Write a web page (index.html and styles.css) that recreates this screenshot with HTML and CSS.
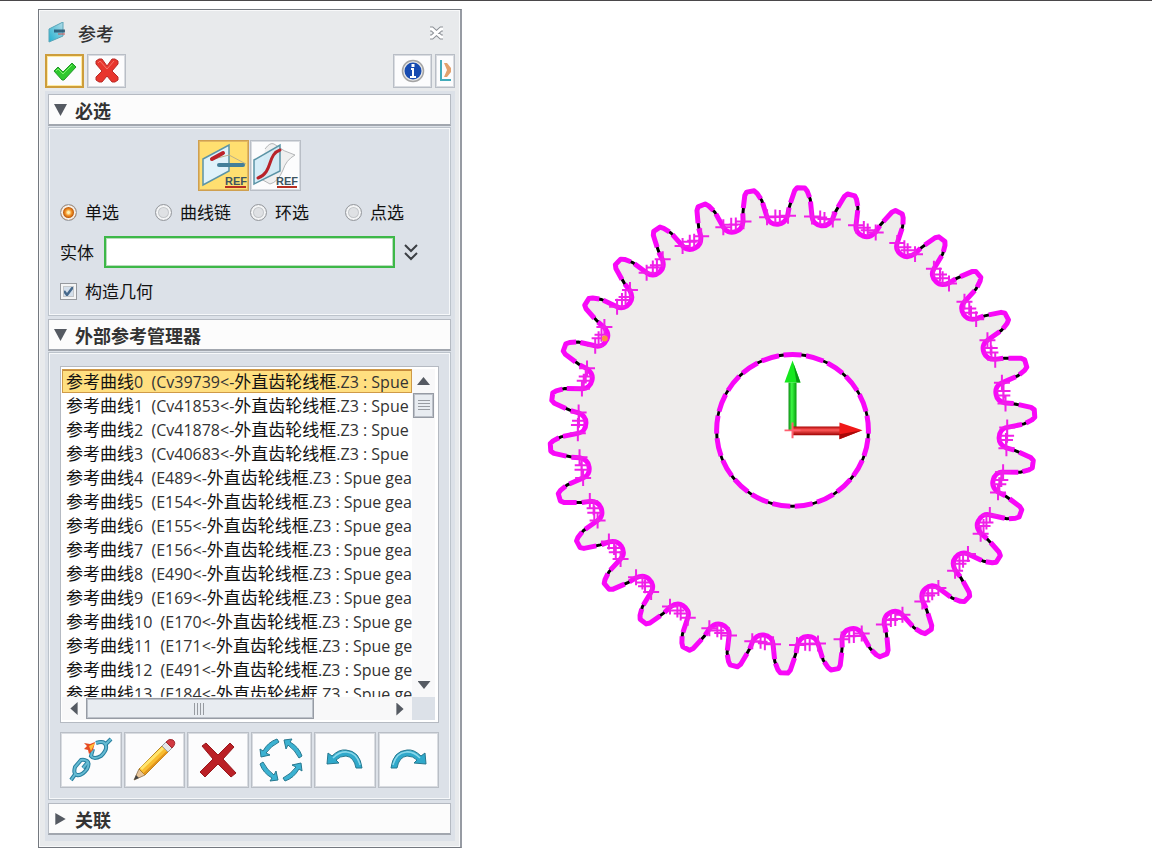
FILE: index.html
```
<!DOCTYPE html>
<html lang="zh-CN">
<head>
    <meta charset="UTF-8">
    <meta name="viewport" content="width=device-width, initial-scale=1.0">
    <title>参考</title>
    <link rel="stylesheet" href="styles.css">
</head>
<body>

    <form class="panel" onsubmit="return false">
        <!-- Title -->
        <header class="title-bar">
            <svg width="20" height="22" viewBox="0 0 20 22">
                <defs>
                    <linearGradient id="plane" x1="1" y1="0" x2="0" y2="1">
                        <stop offset="0" stop-color="#b4dce8"/>
                        <stop offset="1" stop-color="#1fb0d0"/>
                    </linearGradient>
                </defs>
                <path d="M1 7L15 0V14L1 20Z" fill="url(#plane)" stroke="#5aa5b8" stroke-width="1"/>
                <path d="M6 9H17" stroke="#1f4a66" stroke-width="3" stroke-opacity="0.8"/>
                <path d="M10 12H17" stroke="#d05050" stroke-width="1"/>
            </svg>
            <h1>参考</h1>
            <button type="button" class="close" aria-label="关闭">
                <svg width="18" height="14" viewBox="0 0 18 14">
                    <path d="M3 3H5L14 11H16M16 3H14L5 11H3" fill="none" stroke="#8c9096" stroke-width="5"/>
                    <path d="M3 3H5L14 11H16M16 3H14L5 11H3" fill="none" stroke="#fff" stroke-width="3"/>
                </svg>
            </button>
        </header>

        <div class="actions">
            <button type="submit" class="box ok" aria-label="确定">
                <svg width="26" height="24" viewBox="0 0 26 24">
                    <path d="M2 12L6 8L11 13L20 4L24 8L12 21H10Z" fill="#2fc92f" stroke="#22962a" stroke-width="1" stroke-linejoin="round"/>
                    <path d="M4 12L6 10L11 15L20 6" fill="none" stroke="#7df06c" stroke-width="1"/>
                </svg>
            </button>
            <button type="button" class="box" aria-label="取消">
                <svg width="26" height="26" viewBox="0 0 26 26">
                    <path d="M2 3L5 1H8L13 8L18 1H21L24 3V6L18 13L24 19V22L21 24H18L13 18L8 24H5L2 22V19L8 13L2 6Z" fill="#e8362e" stroke="#b82a26" stroke-width="1" stroke-linejoin="round"/>
                    <path d="M4 5L6 3L13 11L20 3" fill="none" stroke="#f4766c" stroke-width="1"/>
                </svg>
            </button>
            <button type="button" class="box info" aria-label="信息">
                <svg width="24" height="24" viewBox="0 0 24 24">
                    <circle cx="12" cy="12" r="10.5" fill="#e8e8e8" stroke="#a4a4a4" stroke-width="1.5"/>
                    <circle cx="12" cy="12" r="8.5" fill="#174bb0"/>
                    <path d="M12 5V8" stroke="#fff" stroke-width="3"/>
                    <path d="M10 10H12V17M9 18H15M12 10V18" fill="none" stroke="#fff" stroke-width="2"/>
                </svg>
            </button>
            <button type="button" class="box half" aria-label="对齐">
                <svg width="14" height="24" viewBox="0 0 14 24">
                    <path d="M3 1V21H13" fill="none" stroke="#42abba" stroke-width="2"/>
                    <path d="M6 4H9L13 9V13L9 18H6L9 11Z" fill="#e2a06c"/>
                </svg>
            </button>
        </div>

        <div class="sections">
            <!-- Required -->
            <h2 class="section-head"><button type="button"><span class="arrow down"></span>必选</button></h2>
            <section class="section required">
                <div class="modes">
                    <button type="button" class="box mode selected" aria-label="参考几何">
                        <svg width="47" height="47" viewBox="0 0 47 47">
                            <path d="M3 17L29 3V29L3 43Z" fill="#dff2fa" stroke="#5b94a6" stroke-width="1.5"/>
                            <path d="M10 18L29 13L46 22" fill="none" stroke="#b9b08a" stroke-width="1"/>
                            <path d="M12 17L23 11" stroke="#bd2228" stroke-width="4" stroke-linecap="round"/>
                            <path d="M19 23H43" stroke="#437f99" stroke-width="4" stroke-linecap="round"/>
                            <text x="25" y="43" class="ref">REF</text>
                            <path d="M25 45H46" stroke="#b83022" stroke-width="2"/>
                        </svg>
                    </button>
                    <button type="button" class="box mode" aria-label="参考曲线">
                        <svg width="47" height="47" viewBox="0 0 47 47">
                            <path d="M13 7Q18 0 22 2Q32 10 43 13Q34 18 31 28Q26 40 18 42L9 37" fill="#f0f0f0" stroke="#b4b6b8" stroke-width="1"/>
                            <path d="M2 18L28 3V29L2 42Z" fill="#c9e8f6" fill-opacity="0.75" stroke="#5b94a6" stroke-width="1.5"/>
                            <path d="M6 36C14 33 16 27 18 21S22 10 28 8" fill="none" stroke="#b8232a" stroke-width="3" stroke-linecap="round"/>
                            <text x="24" y="43" class="ref">REF</text>
                            <path d="M25 45H45" stroke="#b83022" stroke-width="2"/>
                        </svg>
                    </button>
                </div>
                <div class="radios">
                    <label><input type="radio" name="pick" checked>单选</label>
                    <label><input type="radio" name="pick">曲线链</label>
                    <label><input type="radio" name="pick">环选</label>
                    <label><input type="radio" name="pick">点选</label>
                </div>
                <div class="entity">
                    <label for="entity">实体</label>
                    <input type="text" id="entity">
                    <button type="button" class="more" aria-label="更多">
                        <svg width="14" height="18" viewBox="0 0 14 18">
                            <path d="M1 2L7 8L13 2M1 10L7 16L13 10" fill="none" stroke="#3c3f44" stroke-width="2"/>
                        </svg>
                    </button>
                </div>
                <label class="construct"><input type="checkbox" checked>构造几何</label>
            </section>

            <!-- External reference manager -->
            <h2 class="section-head"><button type="button"><span class="arrow down"></span>外部参考管理器</button></h2>
            <section class="section manager">
                <div class="list-box">
                    <ul class="list" role="listbox" aria-label="外部参考管理器">
                        <li role="option" aria-selected="true">参考曲线<span>0  (Cv39739&lt;-</span>外直齿轮线框<span>.Z3 : Spue</span></li>
                        <li role="option">参考曲线<span>1  (Cv41853&lt;-</span>外直齿轮线框<span>.Z3 : Spue</span></li>
                        <li role="option">参考曲线<span>2  (Cv41878&lt;-</span>外直齿轮线框<span>.Z3 : Spue</span></li>
                        <li role="option">参考曲线<span>3  (Cv40683&lt;-</span>外直齿轮线框<span>.Z3 : Spue</span></li>
                        <li role="option">参考曲线<span>4  (E489&lt;-</span>外直齿轮线框<span>.Z3 : Spue gea</span></li>
                        <li role="option">参考曲线<span>5  (E154&lt;-</span>外直齿轮线框<span>.Z3 : Spue gea</span></li>
                        <li role="option">参考曲线<span>6  (E155&lt;-</span>外直齿轮线框<span>.Z3 : Spue gea</span></li>
                        <li role="option">参考曲线<span>7  (E156&lt;-</span>外直齿轮线框<span>.Z3 : Spue gea</span></li>
                        <li role="option">参考曲线<span>8  (E490&lt;-</span>外直齿轮线框<span>.Z3 : Spue gea</span></li>
                        <li role="option">参考曲线<span>9  (E169&lt;-</span>外直齿轮线框<span>.Z3 : Spue gea</span></li>
                        <li role="option">参考曲线<span>10  (E170&lt;-</span>外直齿轮线框<span>.Z3 : Spue ge</span></li>
                        <li role="option">参考曲线<span>11  (E171&lt;-</span>外直齿轮线框<span>.Z3 : Spue ge</span></li>
                        <li role="option">参考曲线<span>12  (E491&lt;-</span>外直齿轮线框<span>.Z3 : Spue ge</span></li>
                        <li role="option">参考曲线<span>13  (E184&lt;-</span>外直齿轮线框<span>.Z3 : Spue ge</span></li>
                    </ul>
                    <div class="bar vertical">
                        <button type="button" aria-label="向上"><span class="arrow up"></span></button>
                        <div class="thumb"></div>
                        <button type="button" class="end" aria-label="向下"><span class="arrow down"></span></button>
                    </div>
                    <div class="bar horizontal">
                        <button type="button" aria-label="向左"><span class="arrow left"></span></button>
                        <div class="thumb"></div>
                        <button type="button" class="end" aria-label="向右"><span class="arrow right"></span></button>
                    </div>
                </div>
                <div class="tools">
                    <button type="button" class="box" aria-label="断开链接">
                        <svg width="46" height="46" viewBox="0 0 46 46">
                            <g fill="none" stroke="#287f9f" stroke-width="4">
                                <path d="M3 43L8 36M37 8L43 2"/>
                                <path d="M13 23L7 30Q5 37 9 38Q14 39 19 32Q22 26 19 24Q16 22 13 23Z"/>
                                <path d="M28 6Q37 3 38 9Q39 13 33 19Q26 23 23 19L25 12M15 31L20 25"/>
                            </g>
                            <g fill="none" stroke="#65bbd3" stroke-width="2">
                                <path d="M3 43L8 36M37 8L43 2"/>
                                <path d="M13 23L7 30Q5 37 9 38Q14 39 19 32Q22 26 19 24Q16 22 13 23Z"/>
                                <path d="M28 6Q37 3 38 9Q39 13 33 19Q26 23 23 19L25 12M15 31L20 25"/>
                            </g>
                            <path d="M27 5L22 7L16 6L19 9L16 12L20 13L21 17L25 13Z" fill="#e64a22"/>
                            <path d="M27 6L21 9L23 14Z" fill="#ffc03a"/>
                        </svg>
                    </button>
                    <button type="button" class="box" aria-label="编辑">
                        <svg width="46" height="46" viewBox="0 0 46 46">
                            <path d="M3 43L8 32L14 38Z" fill="#e8c497" stroke="#a08664" stroke-width="1"/>
                            <path d="M3 43L5 38L8 41Z" fill="#444"/>
                            <path d="M8 32L31 9L37 15L14 38Z" fill="#f9bd30" stroke="#b38020" stroke-width="1"/>
                            <path d="M10 32L32 11" stroke="#ffe46c" stroke-width="3"/>
                            <path d="M13 37L36 15" stroke="#e2951e" stroke-width="2"/>
                            <path d="M31 9L35 5L41 11L37 15Z" fill="#e4e6e8" stroke="#9b9da0" stroke-width="1"/>
                            <path d="M35 5Q38 1 42 3Q46 6 41 11Z" fill="#d23a42" stroke="#a0282f" stroke-width="1"/>
                        </svg>
                    </button>
                    <button type="button" class="box" aria-label="删除">
                        <svg width="46" height="46" viewBox="0 0 46 46">
                            <path d="M7 9L11 6L23 18L35 6L39 10L28 22L41 36L36 40L23 27L10 40L5 35L18 22Z" fill="#bb2026" stroke="#98181d" stroke-width="1"/>
                        </svg>
                    </button>
                    <button type="button" class="box" aria-label="更新">
                        <svg width="46" height="46" viewBox="0 0 46 46">
                            <g fill="#3bb2d2" stroke="#27788f" stroke-width="1" stroke-linejoin="round">
                                <path id="turn" d="M19 2L21 5Q13 9 8 16L12 18L3 20L2 12L5 14Q10 5 19 2Z"/>
                                <use href="#turn" transform="rotate(-90 23 23)"/>
                                <use href="#turn" transform="rotate(180 23 23)"/>
                                <use href="#turn" transform="rotate(90 23 23)"/>
                            </g>
                        </svg>
                    </button>
                    <button type="button" class="box" aria-label="撤销">
                        <svg width="46" height="46" viewBox="0 0 46 46">
                            <path id="bend" d="M6 16L10 19Q17 12 24 13Q38 14 40 31H34Q32 20 24 19Q18 19 14 23L17 26L5 27Z" fill="#2fa9cb" stroke="#27788f" stroke-width="1" stroke-linejoin="round"/>
                            <path d="M11 21Q18 14 25 15Q35 16 38 28" fill="none" stroke="#8bd8ea" stroke-width="1.5"/>
                        </svg>
                    </button>
                    <button type="button" class="box" aria-label="重做">
                        <svg width="46" height="46" viewBox="0 0 46 46">
                            <g transform="translate(46 0) scale(-1 1)">
                                <use href="#bend"/>
                                <path d="M11 21Q18 14 25 15Q35 16 38 28" fill="none" stroke="#8bd8ea" stroke-width="1.5"/>
                            </g>
                        </svg>
                    </button>
                </div>
            </section>

            <!-- Association -->
            <h2 class="section-head"><button type="button"><span class="arrow right"></span>关联</button></h2>
        </div>
    </form>

    <!-- Model view, origin at the gear centre -->
    <main class="view">
        <svg viewBox="-331 -430 691 859" role="img" aria-label="齿轮">
            <defs>
                <linearGradient id="green">
                    <stop offset="0" stop-color="#0b8a12"/>
                    <stop offset="0.4" stop-color="#3dfa45"/>
                    <stop offset="1" stop-color="#069c0c"/>
                </linearGradient>
                <linearGradient id="red" x2="0" y2="1">
                    <stop offset="0" stop-color="#a80000"/>
                    <stop offset="0.4" stop-color="#ff5a5a"/>
                    <stop offset="1" stop-color="#9c0000"/>
                </linearGradient>
            </defs>
            <path id="gearBody" class="body"/>
            <path id="gearCurves" class="curve"/>
            <path id="gearPoints" class="points"/>
            <circle cx="-188" cy="-92" r="3" fill="#ff9040"/>
            <circle class="hole" r="76"/>
            <circle class="curve" r="76" pathLength="210" stroke-dasharray="8 2" stroke-dashoffset="-1" transform="rotate(90)"/>
            <path d="M-4 0V-48H4V0Z" fill="url(#green)"/>
            <path d="M-8 -48L0 -70L8 -48Z" fill="#16e81e"/>
            <path d="M1 -67L8 -48H4Z" fill="#0a9a12"/>
            <path d="M0 -4H48V5H0Z" fill="url(#red)"/>
            <path d="M47 -8L70 0L47 9Z" fill="#f01818"/>
            <path d="M47 9L70 0L47 4Z" fill="#a80808"/>
            <path d="M-8 0H8M0 -8V8" stroke="#ff6070" stroke-width="2"/>
        </svg>
    </main>

    <script src="script.js"></script>
</body>
</html>
```
FILE: styles.css
```
* {
    box-sizing: border-box;
}

body {
    margin: 0;
    min-height: 100vh;
    display: flex;
    align-items: flex-start;
    border-top: 1px solid #4a484a;
    background: #fff;
    color: #111;
    font-family: "Noto Sans CJK SC", sans-serif;
    font-size: 17px;
    line-height: 24px;
}

button {
    margin: 0;
    padding: 0;
    border: 0;
    background: none;
    color: inherit;
    font: inherit;
}

svg {
    display: block;
}

.panel {
    flex: 0 1 424px;
    min-width: 0;
    margin: 8px 0 8px 38px;
    padding: 0 5px 6px 6px;
    border: 1px solid #74787f;
    border-right: 2px solid #979ba3;
    background: #e8eaec;
    box-shadow: inset 0 0 0 1px #f8f9fa;
}

/* Title bar and confirm buttons */
.title-bar {
    display: flex;
    align-items: center;
    padding: 11px 10px 9px 3px;
}

.title-bar h1 {
    margin: 0 auto 0 10px;
    font-size: 18px;
    font-weight: 500;
    color: #333;
}

.actions {
    display: flex;
    gap: 3px;
    padding-bottom: 3px;
}

.box {
    display: flex;
    align-items: center;
    justify-content: center;
    border: 1px solid #b9bec6;
    background: #fcfcfd;
    box-shadow: inset 0 0 0 1px #d9dce1;
}

.actions .box {
    width: 39px;
    height: 34px;
}

.actions .ok {
    border: 2px solid #cd9d3c;
    box-shadow: inset 0 0 0 1px #ffeaa0;
}

.actions .info {
    margin-left: auto;
}

.actions .half {
    width: 20px;
}

/* Sections */
.sections {
    padding: 3px 4px 6px 3px;
    background: #dce1e8;
}

.section-head {
    margin: 0;
    border: 1px solid #b5bac2;
    border-bottom: 2px solid #a2a7af;
    background: #fcfcfc;
    font-size: 18px;
    font-weight: 700;
    color: #333;
}

.section-head button {
    display: flex;
    align-items: center;
    gap: 8px;
    width: 100%;
    height: 29px;
    padding: 1px 0 0 5px;
}

.section {
    margin: 1px 0 3px;
    border: 1px solid #bcc3cb;
    box-shadow: inset 0 0 0 1px #f6f8fa;
}

.arrow {
    width: 13px;
    height: 12px;
    background: #555a62;
}

.arrow.down {
    clip-path: polygon(0 0, 100% 0, 50% 100%);
}

.arrow.up {
    clip-path: polygon(50% 0, 100% 100%, 0 100%);
}

.arrow.right {
    clip-path: polygon(10% 0, 90% 50%, 10% 100%);
}

.arrow.left {
    clip-path: polygon(90% 0, 10% 50%, 90% 100%);
}

/* Required inputs */
.required {
    padding: 12px 10px 12px 11px;
}

.modes {
    display: flex;
    justify-content: center;
    gap: 1px;
    padding-right: 2px;
}

.mode {
    width: 51px;
    height: 51px;
}

.mode.selected {
    border-color: #cfa050;
    background: #ffdf70;
    box-shadow: inset 0 0 0 1px #e2b862;
}

.ref {
    font: bold 11px "Liberation Sans", sans-serif;
    fill: #3d555f;
}

.radios {
    display: grid;
    grid-template-columns: repeat(4, 1fr);
    margin: 9px 0 12px;
}

.radios label,
.construct {
    display: flex;
    align-items: center;
    gap: 8px;
}

.radios input,
.construct input {
    appearance: none;
    flex: none;
    width: 17px;
    height: 17px;
    margin: 0;
    border: 1px solid #96999e;
    background: #dfe1e4;
    box-shadow: inset 0 0 0 2px #f4f5f6, inset 0 0 0 3px #c4c7ca;
}

.radios input {
    border-radius: 50%;
}

.radios input:checked {
    background: radial-gradient(circle, #fff0b0 0 1px, #f5962a 3px, #c4600e 5px);
    box-shadow: inset 0 0 0 2px #f4f0ea;
}

.construct input:checked {
    background: #d4dfeb url('data:image/svg+xml,<svg xmlns="http://www.w3.org/2000/svg" viewBox="0 0 17 17"><path d="M4 8L7 12L13 4" fill="none" stroke="%2346698c" stroke-width="2.5"/></svg>') center / 17px;
}

.entity {
    display: flex;
    align-items: center;
    margin-bottom: 11px;
}

.entity input {
    flex: 1;
    min-width: 0;
    height: 32px;
    margin: 0 9px 0 10px;
    border: 2px solid #3db848;
    background: #fff;
    box-shadow: inset 0 0 0 1px #b9dcbc;
}

.more {
    margin-right: 22px;
}

/* Reference manager */
.manager {
    padding: 13px 11px 11px;
}

.list-box {
    display: grid;
    grid-template: 328px 23px / minmax(0, 1fr) 23px;
    padding: 2px 3px 2px 1px;
    border: 1px solid #b5bac2;
    background: #fff;
}

.list {
    margin: 0;
    padding: 0;
    overflow: hidden;
    list-style: none;
}

.list li {
    height: 24px;
    padding: 0 4px;
    white-space: pre;
    line-height: 23px;
}

.list li[aria-selected="true"] {
    background: #ffdf80;
    box-shadow: inset 0 0 0 1px #cf9a48, inset 0 2px #c68a3c;
}

.list span {
    font-family: "Open Sans", sans-serif;
    font-size: 16px;
    line-height: 16px;
    color: #333;
}

.bar {
    display: flex;
    background: #f8f8f9;
}

.bar button {
    display: flex;
    flex: none;
    align-items: center;
    justify-content: center;
    width: 24px;
    height: 24px;
}

.bar .end {
    margin: auto 0 0 auto;
}

.vertical {
    flex-direction: column;
    align-items: center;
}

.vertical .arrow {
    height: 8px;
}

.horizontal {
    align-items: center;
}

.horizontal .arrow {
    width: 9px;
    height: 13px;
}

.thumb {
    border: 1px solid #969ba4;
    box-shadow: inset 0 0 0 1px #bcc1c9;
    background: #e8ecf1;
}

.vertical .thumb {
    width: 21px;
    height: 25px;
    background: repeating-linear-gradient(#979ba1 0 1px, #e8ecf1 1px 3px) center / 12px 11px no-repeat, #e8ecf1;
}

.horizontal .thumb {
    width: 65%;
    height: 21px;
    background: repeating-linear-gradient(90deg, #979ba1 0 1px, #e8ecf1 1px 3px) center / 11px 12px no-repeat, #e8ecf1;
}

.list-box::after {
    content: "";
    background: #dce1e8;
}

.tools {
    display: grid;
    grid-template-columns: repeat(6, 1fr);
    gap: 2px;
    margin-top: 9px;
}

.tools .box {
    height: 56px;
}

/* Model view */
.view {
    flex: 1;
    min-width: 0;
}

.view svg {
    width: 100%;
}

.body {
    fill: #eeeceb;
    stroke: #000;
    stroke-width: 3;
}

.hole {
    fill: #fff;
    stroke: #000;
    stroke-width: 3;
}

.curve {
    fill: none;
    stroke: #f808f8;
    stroke-width: 5;
    stroke-linejoin: round;
}

.points {
    fill: none;
    stroke: #f020e8;
    stroke-width: 2;
}
```
FILE: script.js
```
// Gear outline: 30 teeth, angles in degrees clockwise from the top
const TEETH = 30;
const PITCH = 360 / TEETH;
const FIRST = 2;

function pt(angle, r) {
    const a = angle * Math.PI / 180;
    return (Math.sin(a) * r).toFixed(1) + ' ' + (-Math.cos(a) * r).toFixed(1);
}

let body = '';
let curves = '';
let points = '';

// Small cross, always upright
function cross(angle, r, size) {
    points += 'M' + pt(angle, r) + 'm' + -size + ' 0h' + size * 2 + 'm' + -size + ' ' + -size + 'v' + size * 2;
}

for (let i = 0; i < TEETH; i++) {
    const t = FIRST + i * PITCH;
    const v = t + PITCH / 2;
    const tip = 'L' + pt(t - 1.5, 240) + 'L' + pt(t - 0.9, 243) + 'L' + pt(t + 0.9, 243) + 'L' + pt(t + 1.5, 240);
    const valley = 'C' + pt(v - 2.6, 210) + ' ' + pt(v - 1.5, 207) + ' ' + pt(v, 207)
        + 'C' + pt(v + 1.5, 207) + ' ' + pt(v + 2.2, 210) + ' ' + pt(v + 2.7, 215);

    body += (i ? 'L' : 'M') + pt(t - 3.3, 215) + 'L' + pt(t - 2.8, 224) + tip + 'L' + pt(t + 2.4, 232) + 'L' + pt(t + 3.2, 215) + valley;

    // Tip and valley curves stop short of each other on the flanks
    curves += 'M' + pt(t - 2.5, 228) + tip + 'L' + pt(t + 2.2, 234);
    curves += 'M' + pt(t + 2.5, 230) + 'L' + pt(t + 3.2, 215) + valley + 'L' + pt(v + 3.1, 223);

    cross(v - 2.8, 215, 8);
    cross(v - 0.6, 215, 7);
    cross(v + 0.6, 214, 7);
    cross(v + 2.8, 215, 8);
}

document.getElementById('gearBody').setAttribute('d', body + 'Z');
document.getElementById('gearCurves').setAttribute('d', curves);
document.getElementById('gearPoints').setAttribute('d', points);
```
